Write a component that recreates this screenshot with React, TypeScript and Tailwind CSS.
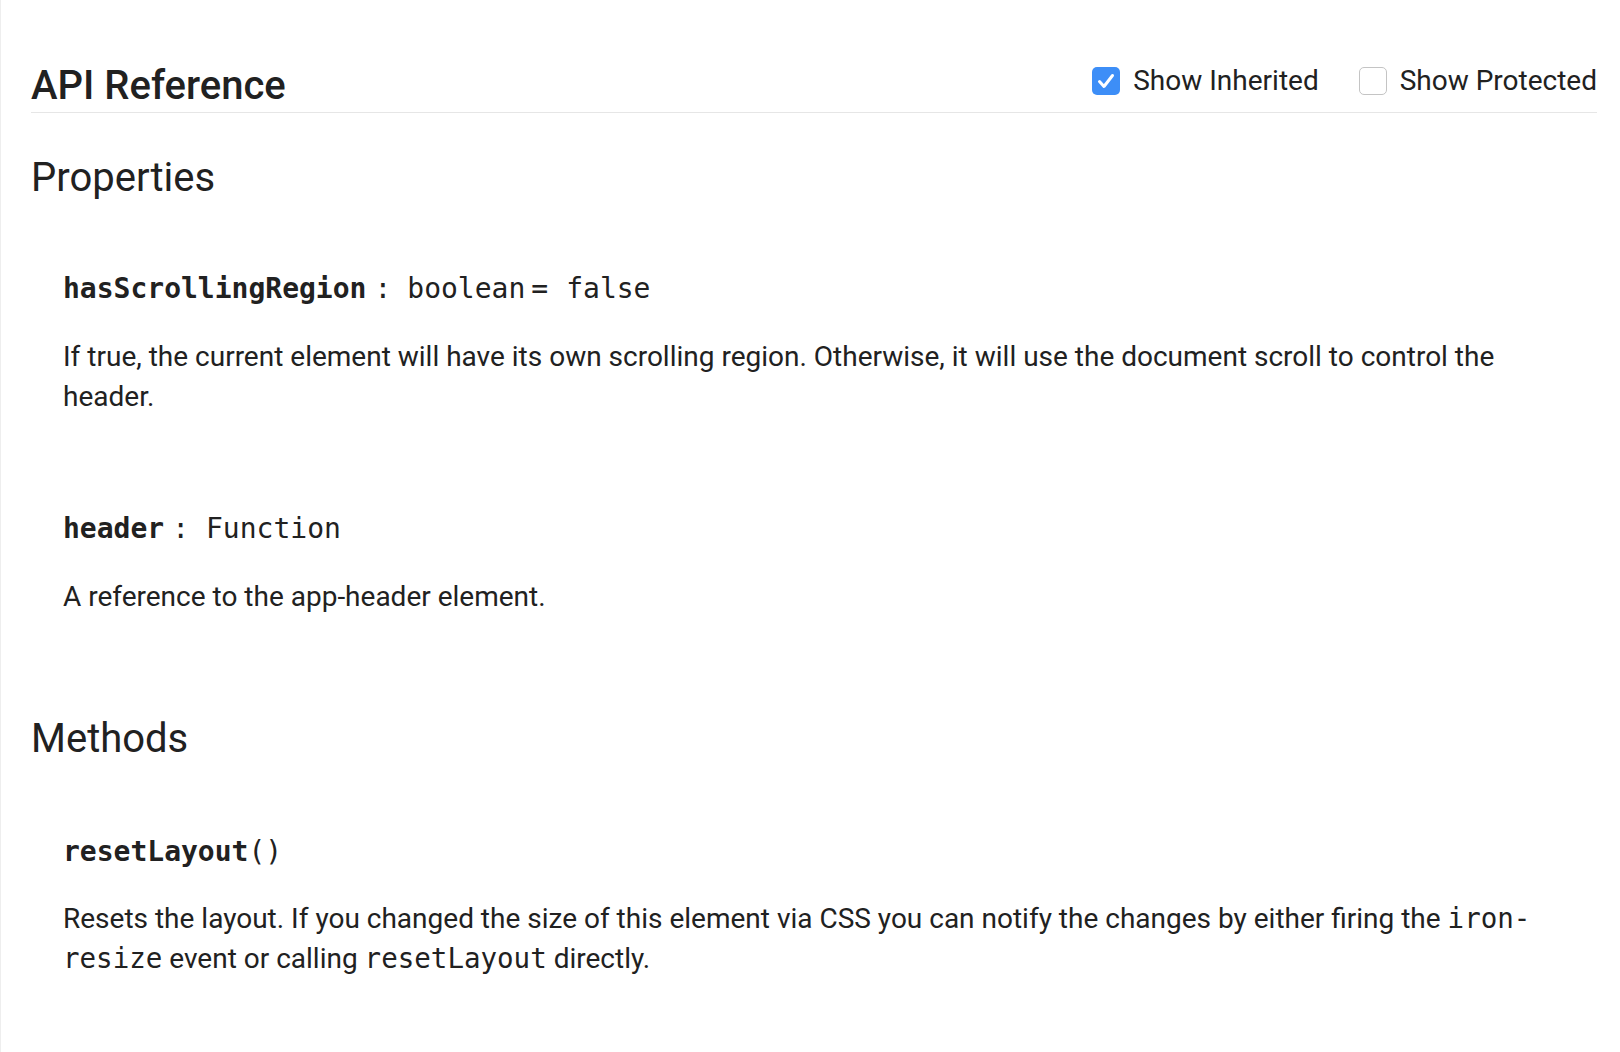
import React from "react";

const sans = { fontFamily: "Roboto, 'Noto Sans', Arial, sans-serif" };
const mono = { fontFamily: "'DejaVu Sans Mono', 'Liberation Mono', monospace" };

function Box({ checked, label }: { checked: boolean; label: string }) {
  return (
    <label className="flex items-center gap-[13px] cursor-pointer">
      {checked ? (
        <span className="w-[28px] h-[28px] rounded-[5px] bg-[#3d8ef7] flex items-center justify-center">
          <svg width="28" height="28" viewBox="0 0 28 28" fill="none">
            <path d="M7.5 14.5l4.5 5L20.5 8.5" stroke="white" strokeWidth="3" strokeLinecap="round" strokeLinejoin="round" />
          </svg>
        </span>
      ) : (
        <span className="w-[28px] h-[28px] rounded-[5px] border-[1.5px] border-[#c4c4c4] bg-white" />
      )}
      <span className="text-[28px] leading-[36px] text-[#212121]">{label}</span>
    </label>
  );
}

function Code({ children }: { children: React.ReactNode }) {
  return (
    <code className="text-[27.5px] leading-none" style={mono}>
      {children}
    </code>
  );
}

export default function App() {
  return (
    <div className="min-h-[1052px] bg-white border-l border-[#eeeeee] pl-[30px] pr-[23px] pt-[62px] text-[#212121]" style={sans}>
      <div className="flex items-center justify-between border-b-[1.5px] border-[#e6e6e6] pb-[2px]">
        <h1 className="text-[40px] leading-[48px] font-medium">API Reference</h1>
        <div className="flex items-center gap-[40px] mb-[11px]">
          <Box checked label="Show Inherited" />
          <Box checked={false} label="Show Protected" />
        </div>
      </div>

      <h2 className="mt-[41px] text-[40px] leading-[48px]">Properties</h2>

      <div className="pl-[32px] pr-[32px] pt-[67px] pb-[24px]">
        <div className="text-[28px] leading-[40px] whitespace-nowrap" style={mono}>
          <b>hasScrollingRegion</b>
          <span className="ml-[8px]">:</span>
          <span className="ml-[16px]">boolean</span>
          <span className="ml-[6px]">=</span>
          <span className="ml-[18px]">false</span>
        </div>
        <p className="mt-[28px] text-[28px] leading-[40px]">
          If true, the current element will have its own scrolling region. Otherwise, it will use the document scroll to control the header.
        </p>
      </div>

      <div className="pl-[32px] pr-[32px] pt-[68px] pb-[24px]">
        <div className="text-[28px] leading-[40px] whitespace-nowrap" style={mono}>
          <b>header</b>
          <span className="ml-[8px]">:</span>
          <span className="ml-[17px]">Function</span>
        </div>
        <p className="mt-[28px] text-[28px] leading-[40px]">A reference to the app-header element.</p>
      </div>

      <h2 className="mt-[74px] text-[40px] leading-[48px]">Methods</h2>

      <div className="pl-[32px] pr-[32px] pt-[69px] pb-[24px]">
        <div className="text-[28px] leading-[40px] whitespace-nowrap" style={mono}>
          <b>resetLayout</b>
          <span>()</span>
        </div>
        <p className="mt-[27px] text-[28px] leading-[40px]">
          Resets the layout. If you changed the size of this element via CSS you can notify the changes by either firing the{" "}
          <Code>iron-resize</Code> event or calling <Code>resetLayout</Code> directly.
        </p>
      </div>
    </div>
  );
}
